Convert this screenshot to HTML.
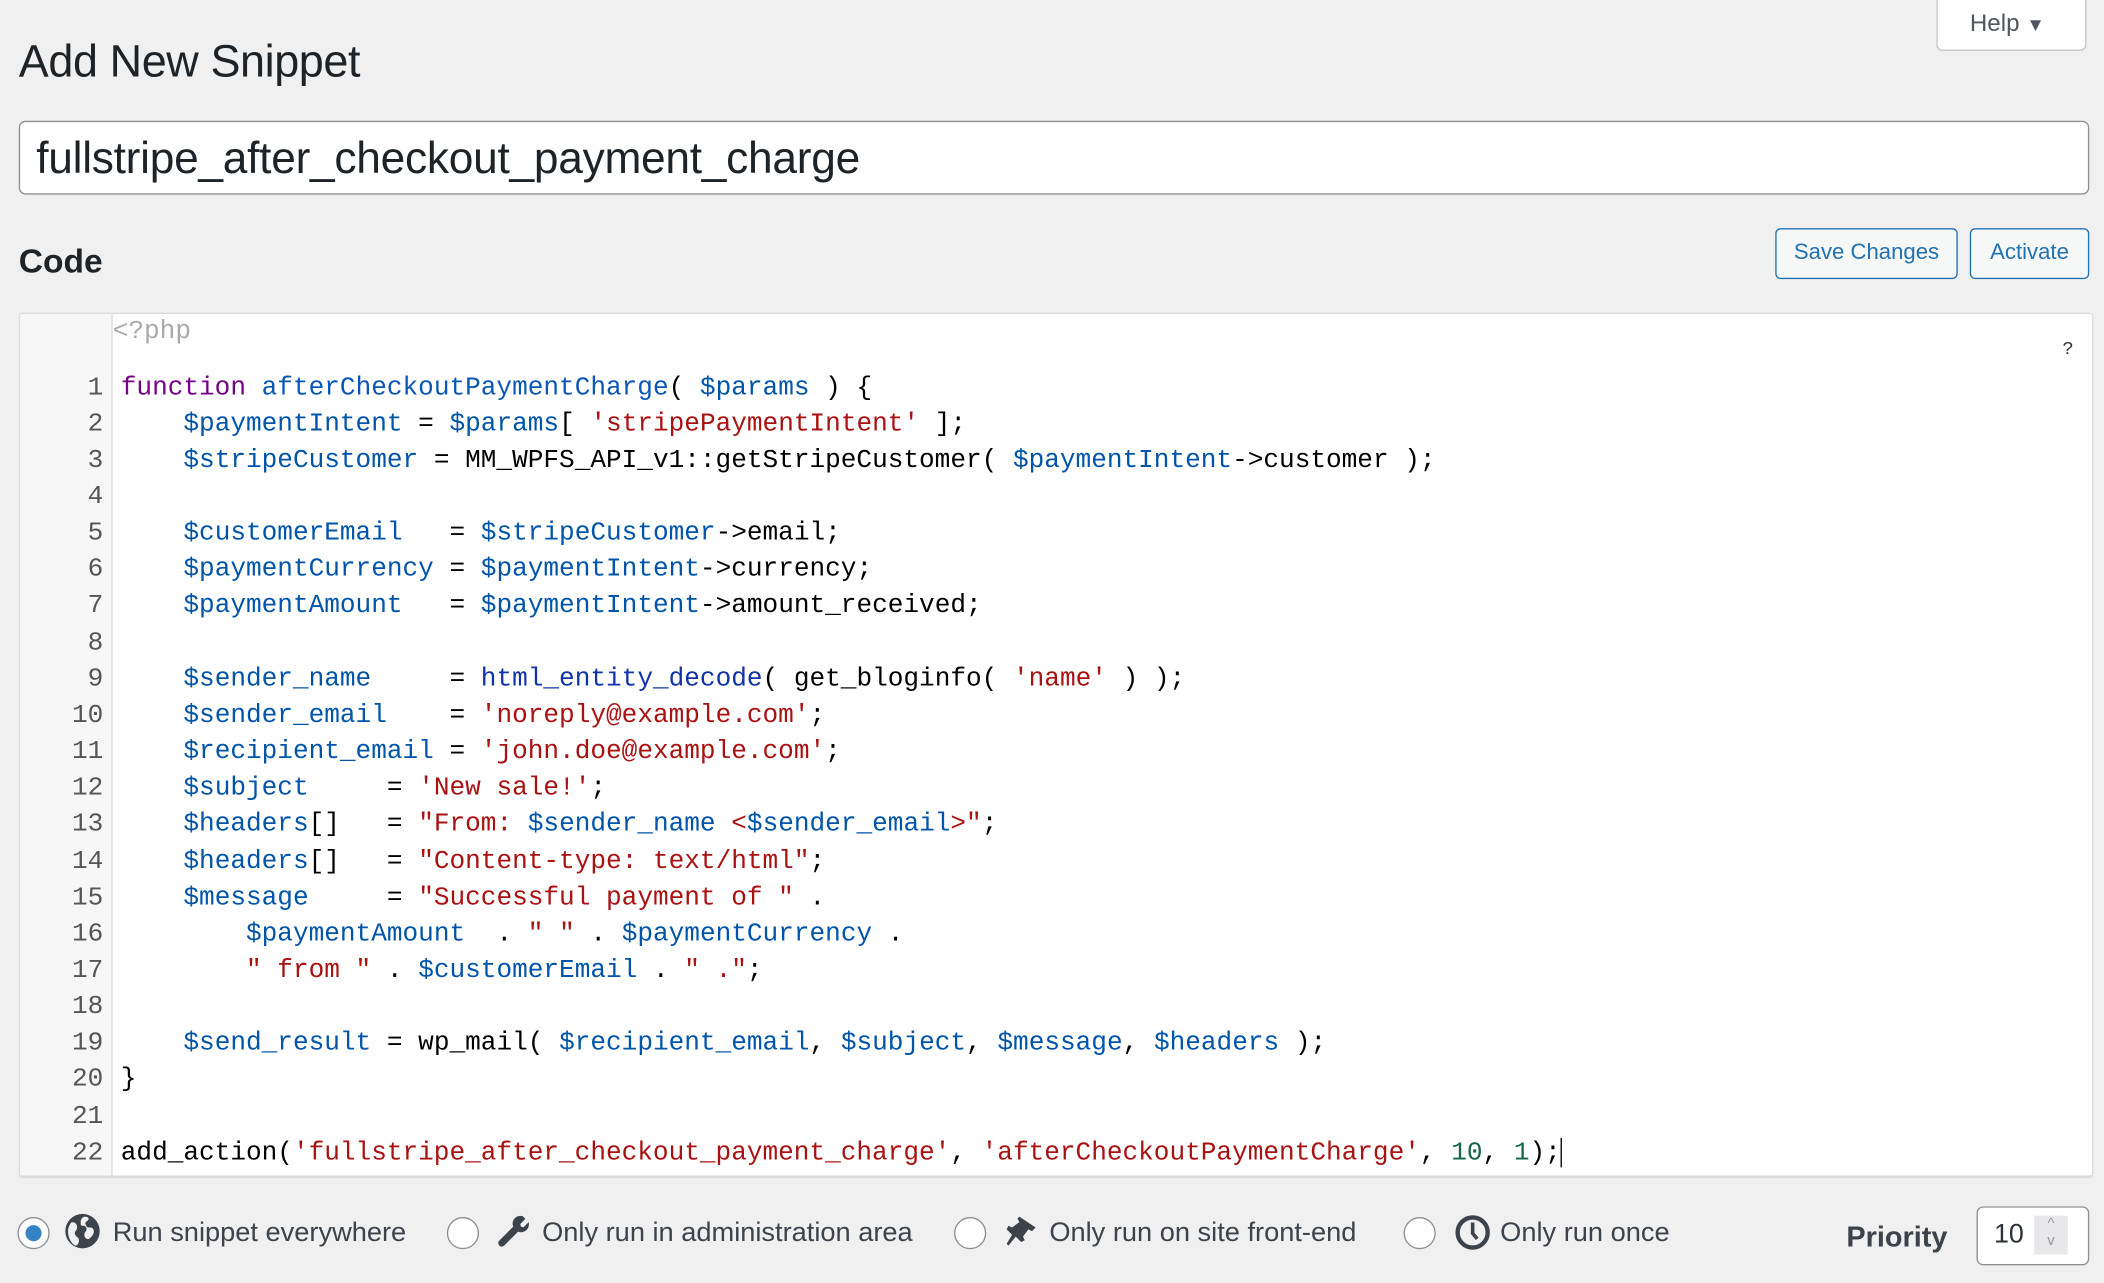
<!DOCTYPE html>
<html><head><meta charset="utf-8"><style>
html,body{margin:0;padding:0;background:#f0f0f1;width:2104px;height:1282px;overflow:hidden}
#w{position:absolute;left:0;top:0;width:1568px;height:956px;transform:scale(1.34184);transform-origin:0 0;font-family:"Liberation Sans",sans-serif;color:#1d2327}
.a{position:absolute}
.help{left:1443px;top:-2px;width:112px;height:40px;background:#fff;border:1px solid #c3c4c7;border-top:none;border-radius:0 0 5px 5px;box-sizing:border-box;font-size:18px;color:#50575e;line-height:38px;padding-left:24px}
h1{position:absolute;left:14px;top:26px;margin:0;font-size:33.5px;font-weight:400;line-height:42px;letter-spacing:-0.3px}
.title{left:14px;top:90px;width:1543px;height:55px;box-sizing:border-box;border:1.5px solid #8c8f94;border-radius:5px;background:#fff;font-size:33px;line-height:54px;padding-left:12px;letter-spacing:-0.2px}
.code{left:14px;top:181px;font-size:25px;font-weight:700}
.btn{top:170px;height:38px;box-sizing:border-box;border:1.5px solid #2271b1;border-radius:4px;background:#f6f7f7;color:#2271b1;font-size:16.5px;line-height:35px;text-align:center}
.ed{left:14px;top:233px;width:1546px;height:645px;box-sizing:border-box;background:#fff;border:1px solid #dcdcde;border-bottom:2px solid #dcdcde;border-radius:3px;overflow:hidden}
.gut{position:absolute;left:0;top:0;width:68px;height:100%;background:#f7f7f7;border-right:1px solid #ddd}
pre{margin:0;font-family:"Liberation Mono",monospace;font-size:19.45px;line-height:27.15px;position:absolute;white-space:pre}
.ln{color:#555;text-align:right;left:0;width:62px;top:41.5px}
.src{left:75px;top:41.5px;color:#000}
.k{color:#770088}.d{color:#0b57b7}.v{color:#0055aa}.s{color:#aa1111}.n{color:#116644}.b{color:#1133aa}
.opt{top:905px;font-size:20.3px;color:#3c434a;line-height:28px}
.r{position:absolute;top:907px;width:22px;height:22px;border:1.5px solid #8c8f94;border-radius:50%;background:#fff}
</style></head><body><div id="w">
<div class="a help">Help <span style="font-size:14px">▼</span></div>
<h1>Add New Snippet</h1>
<div class="a title">fullstripe_after_checkout_payment_charge</div>
<div class="a code">Code</div>
<div class="a btn" style="left:1323px;width:136px">Save Changes</div>
<div class="a btn" style="left:1468px;width:89px">Activate</div>
<div class="a ed">
<div class="gut"></div>
<pre style="left:69px;top:0;line-height:27px;color:#aaa">&lt;?php</pre>
<pre style="left:1522px;top:14px;font-size:14px;color:#333">?</pre>
<pre class="ln">1
2
3
4
5
6
7
8
9
10
11
12
13
14
15
16
17
18
19
20
21
22</pre>
<pre class="src"><span class="k">function</span> <span class="d">afterCheckoutPaymentCharge</span>( <span class="v">$params</span> ) {
    <span class="v">$paymentIntent</span> = <span class="v">$params</span>[ <span class="s">'stripePaymentIntent'</span> ];
    <span class="v">$stripeCustomer</span> = MM_WPFS_API_v1::getStripeCustomer( <span class="v">$paymentIntent</span>-&gt;customer );

    <span class="v">$customerEmail</span>   = <span class="v">$stripeCustomer</span>-&gt;email;
    <span class="v">$paymentCurrency</span> = <span class="v">$paymentIntent</span>-&gt;currency;
    <span class="v">$paymentAmount</span>   = <span class="v">$paymentIntent</span>-&gt;amount_received;

    <span class="v">$sender_name</span>     = <span class="b">html_entity_decode</span>( get_bloginfo( <span class="s">'name'</span> ) );
    <span class="v">$sender_email</span>    = <span class="s">'noreply@example.com'</span>;
    <span class="v">$recipient_email</span> = <span class="s">'john.doe@example.com'</span>;
    <span class="v">$subject</span>     = <span class="s">'New sale!'</span>;
    <span class="v">$headers</span>[]   = <span class="s">"From: </span><span class="v">$sender_name</span><span class="s"> &lt;</span><span class="v">$sender_email</span><span class="s">&gt;"</span>;
    <span class="v">$headers</span>[]   = <span class="s">"Content-type: text/html"</span>;
    <span class="v">$message</span>     = <span class="s">"Successful payment of "</span> .
        <span class="v">$paymentAmount</span>  . <span class="s">" "</span> . <span class="v">$paymentCurrency</span> .
        <span class="s">" from "</span> . <span class="v">$customerEmail</span> . <span class="s">" ."</span>;

    <span class="v">$send_result</span> = wp_mail( <span class="v">$recipient_email</span>, <span class="v">$subject</span>, <span class="v">$message</span>, <span class="v">$headers</span> );
}

add_action(<span class="s">'fullstripe_after_checkout_payment_charge'</span>, <span class="s">'afterCheckoutPaymentCharge'</span>, <span class="n">10</span>, <span class="n">1</span>);<span style="border-left:1.5px solid #000"></span></pre>
</div>
<div class="r" style="left:13px"><div style="position:absolute;left:5px;top:5px;width:12px;height:12px;border-radius:50%;background:#3582c4"></div></div>
<svg class="a" style="left:48px;top:904px" width="27" height="27" viewBox="0 0 20 20"><circle cx="10" cy="10" r="9.5" fill="#3c434a"/><path d="M4 5c2 0 3 1 3 3s-2 2-1 4 2 1 2 3-1 3-2 3c-2-1-4-4-4-8 0-2 1-4 2-5zM11 2c2 0 3 1 2 2s-2 1-1 3 3 0 4 2-1 4-2 5-3 0-3-2 2-2 1-4-3 0-3-2 0-3 2-4z" fill="#f0f0f1"/></svg>
<div class="a opt" style="left:84px">Run snippet everywhere</div>
<div class="r" style="left:333px"></div>
<svg class="a" style="left:369px;top:905px" width="27" height="27" viewBox="0 0 20 20"><path d="M16.7 2.5l-2.8 2.8.3 1.5 1.5.3 2.8-2.8c.6 2.3-.6 4.8-3 5.4-1 .3-2 .1-2.8-.2L5 17.2c-.8.8-2 .8-2.7 0s-.8-2 0-2.7l7.7-7.7c-.4-.9-.5-1.9-.2-2.8.6-2.4 3.1-3.6 5.4-3z" fill="#3c434a"/></svg>
<div class="a opt" style="left:404px">Only run in administration area</div>
<div class="r" style="left:711px"></div>
<svg class="a" style="left:747px;top:904px" width="28" height="27" viewBox="0 0 20 20"><path d="M9 2l9 6-2 2-2-1-3 4 1 2-2 1-3-3-4 5-1-1 3-5-3-3 1-2 2 1 4-3-1-2z" fill="#3c434a"/></svg>
<div class="a opt" style="left:782px">Only run on site front-end</div>
<div class="r" style="left:1046px"></div>
<svg class="a" style="left:1084px;top:905px" width="27" height="27" viewBox="0 0 20 20"><circle cx="10" cy="10" r="8.3" fill="none" stroke="#3c434a" stroke-width="2.4"/><path d="M10 4.5V10.5l2.5 3" fill="none" stroke="#3c434a" stroke-width="2"/></svg>
<div class="a opt" style="left:1118px">Only run once</div>
<div class="a" style="left:1376px;top:910px;font-size:21.5px;font-weight:700;color:#3c434a">Priority</div>
<div class="a" style="left:1473px;top:899px;width:84px;height:44px;box-sizing:border-box;border:1.5px solid #8c8f94;border-radius:5px;background:#fff;font-size:20px;line-height:41px;padding-left:12px;color:#2c3338">10<div style="position:absolute;left:42px;top:6px;width:25px;height:29px;background:#e8e8ea;font-size:11px;line-height:13px;text-align:center;color:#999">^<br>v</div></div>
</div></body></html>
